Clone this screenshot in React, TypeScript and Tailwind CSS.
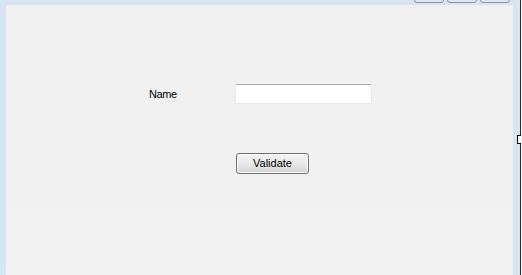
import React from 'react';

export default function App() {
  return (
    <div className="relative w-[522px] h-[275px] overflow-hidden bg-[#d7e4f2] font-['Liberation_Sans',Arial,sans-serif] text-[11px] text-black">
      {/* title bar buttons (cut off at top) */}
      <div className="absolute top-[-18px] left-[414px] flex gap-[3px]">
        <div className="w-[30px] h-[21px] rounded-[3px] border border-[#8a93a8] bg-[#dce6f2]" />
        <div className="w-[30px] h-[21px] rounded-[3px] border border-[#8a93a8] bg-[#dce6f2]" />
        <div className="w-[30px] h-[21px] rounded-[3px] border border-[#8a93a8] bg-[#dce6f2]" />
      </div>

      <div className="flex h-full">
        <div className="w-[6px] shrink-0" />
        {/* client area */}
        <div className="mt-[5px] w-[507px] h-[270px] bg-gradient-to-b from-[#f0f0f0] to-[#f2f2f2] flex flex-col">
          <div className="mt-[79px] flex items-center h-[20px]">
            <span className="ml-[143px] w-[86px] tracking-[-0.4px]">Name</span>
            <div className="w-[137px] h-[20px] bg-white border border-[#e3e9ef] border-t-[#abadb3] rounded-[2px]" />
          </div>
          <div className="mt-[49px] ml-[230px]">
            <button className="w-[73px] h-[21px] rounded-[3px] border border-[#707070] bg-gradient-to-b from-[#f4f4f4] via-[#e9e9e9] to-[#d4d4d4] shadow-[inset_0_0_0_1px_#fcfcfc] text-[11px] leading-none">
              Validate
            </button>
          </div>
        </div>
        <div className="w-[7px] shrink-0" />
        <div className="w-[1px] bg-[#2a2a2a]" />
        <div className="w-[1px] bg-white" />
      </div>

      {/* resize cursor fragment */}
      <div className="absolute left-[517px] top-[135px] w-[4px] h-[9px] border border-r-0 border-black bg-white" />
    </div>
  );
}
